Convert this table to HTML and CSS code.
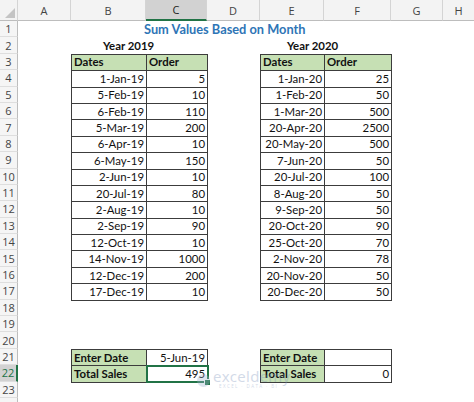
FILE: index.html
```html
<!DOCTYPE html>
<html>
<head>
<meta charset="utf-8">
<link rel="stylesheet" href="styles.css">
</head>
<body>
<div class="sheet">
  <div class="corner"><span class="tri"></span></div>
  <div class="ch">A</div>
  <div class="ch">B</div>
  <div class="ch sel">C</div>
  <div class="ch">D</div>
  <div class="ch">E</div>
  <div class="ch">F</div>
  <div class="ch">G</div>
  <div class="ch last">H</div>

  <div class="rh" style="grid-row:2">1</div>
  <div class="rh" style="grid-row:3">2</div>
  <div class="rh" style="grid-row:4">3</div>
  <div class="rh" style="grid-row:5">4</div>
  <div class="rh" style="grid-row:6">5</div>
  <div class="rh" style="grid-row:7">6</div>
  <div class="rh" style="grid-row:8">7</div>
  <div class="rh" style="grid-row:9">8</div>
  <div class="rh" style="grid-row:10">9</div>
  <div class="rh" style="grid-row:11">10</div>
  <div class="rh" style="grid-row:12">11</div>
  <div class="rh" style="grid-row:13">12</div>
  <div class="rh" style="grid-row:14">13</div>
  <div class="rh" style="grid-row:15">14</div>
  <div class="rh" style="grid-row:16">15</div>
  <div class="rh" style="grid-row:17">16</div>
  <div class="rh" style="grid-row:18">17</div>
  <div class="rh" style="grid-row:19">18</div>
  <div class="rh" style="grid-row:20">19</div>
  <div class="rh" style="grid-row:21">20</div>
  <div class="rh" style="grid-row:22">21</div>
  <div class="rh rsel" style="grid-row:23">22</div>
  <div class="rh" style="grid-row:24">23</div>
  <div class="rh" style="grid-row:25">24</div>

  <div class="title">Sum Values Based on Month</div>
  <div class="year y1">Year 2019</div>
  <div class="year y2">Year 2020</div>

  <table class="tbl t1">
    <colgroup><col class="cb"><col class="cc"></colgroup>
    <tr class="hd"><td>Dates</td><td>Order</td></tr>
    <tr><td>1-Jan-19</td><td>5</td></tr>
    <tr><td>5-Feb-19</td><td>10</td></tr>
    <tr><td>6-Feb-19</td><td>110</td></tr>
    <tr><td>5-Mar-19</td><td>200</td></tr>
    <tr><td>6-Apr-19</td><td>10</td></tr>
    <tr><td>6-May-19</td><td>150</td></tr>
    <tr><td>2-Jun-19</td><td>10</td></tr>
    <tr><td>20-Jul-19</td><td>80</td></tr>
    <tr><td>2-Aug-19</td><td>10</td></tr>
    <tr><td>2-Sep-19</td><td>90</td></tr>
    <tr><td>12-Oct-19</td><td>10</td></tr>
    <tr><td>14-Nov-19</td><td>1000</td></tr>
    <tr><td>12-Dec-19</td><td>200</td></tr>
    <tr><td>17-Dec-19</td><td>10</td></tr>
  </table>

  <table class="tbl t2">
    <colgroup><col class="ce"><col class="cf"></colgroup>
    <tr class="hd"><td>Dates</td><td>Order</td></tr>
    <tr><td>1-Jan-20</td><td>25</td></tr>
    <tr><td>1-Feb-20</td><td>50</td></tr>
    <tr><td>1-Mar-20</td><td>500</td></tr>
    <tr><td>20-Apr-20</td><td>2500</td></tr>
    <tr><td>20-May-20</td><td>500</td></tr>
    <tr><td>7-Jun-20</td><td>50</td></tr>
    <tr><td>20-Jul-20</td><td>100</td></tr>
    <tr><td>8-Aug-20</td><td>50</td></tr>
    <tr><td>9-Sep-20</td><td>50</td></tr>
    <tr><td>20-Oct-20</td><td>90</td></tr>
    <tr><td>25-Oct-20</td><td>70</td></tr>
    <tr><td>2-Nov-20</td><td>78</td></tr>
    <tr><td>20-Nov-20</td><td>50</td></tr>
    <tr><td>20-Dec-20</td><td>50</td></tr>
  </table>

  <table class="tbl t3">
    <colgroup><col class="cb"><col class="cc"></colgroup>
    <tr><td class="lab">Enter Date</td><td>5-Jun-19</td></tr>
    <tr><td class="lab">Total Sales</td><td class="active">495<span class="handle"></span></td></tr>
  </table>

  <table class="tbl t4">
    <colgroup><col class="ce"><col class="cf"></colgroup>
    <tr><td class="lab">Enter Date</td><td></td></tr>
    <tr><td class="lab">Total Sales</td><td>0</td></tr>
  </table>

  <div class="wm">
    <span class="wm-icon"></span>
    <span class="wm-text">exceldemy<span class="wm-sub">EXCEL · DATA · BI</span></span>
  </div>
</div>
</body>
</html>
```

FILE: styles.css
```css
html, body {
  margin: 0;
  padding: 0;
  background: #ffffff;
}
body {
  width: 474px;
  height: 402px;
  overflow: hidden;
  font-family: Lato, "Open Sans", sans-serif;
}
.sheet {
  position: relative;
  display: grid;
  grid-template-columns: 18px 53px 75px 61px 53px 64px 67px 52px 1fr;
  grid-template-rows: 21px repeat(24, 16.4px);
  width: 474px;
  height: 402px;
}
.corner {
  grid-row: 1;
  grid-column: 1;
  background: #f3f3f3;
  border-right: 1px solid #d4d4d4;
  border-bottom: 1px solid #bdbdbd;
  position: relative;
}
.tri {
  position: absolute;
  right: 2px;
  bottom: 2px;
  width: 0;
  height: 0;
  border-left: 10px solid transparent;
  border-bottom: 10px solid #c4c4c4;
}
.ch {
  grid-row: 1;
  background: #f3f3f3;
  border-right: 1px solid #d4d4d4;
  border-bottom: 1px solid #bdbdbd;
  color: #444;
  font-family: "Open Sans", sans-serif;
  font-size: 11px;
  display: flex;
  align-items: center;
  justify-content: center;
}
.ch.last { border-right: none; }
.ch.sel {
  background: #d2d2d2;
  border-bottom: 2px solid #217346;
  color: #222;
}
.rh {
  grid-column: 1;
  background: #f5f5f5;
  border-right: 1px solid #bdbdbd;
  border-bottom: 1px solid #dedede;
  color: #444;
  font-family: "Open Sans", sans-serif;
  font-size: 11px;
  display: flex;
  align-items: center;
  justify-content: center;
}
.rh.rsel {
  background: #d2d2d2;
  border-right: 2px solid #217346;
  color: #217346;
}
.title {
  grid-row: 2;
  grid-column: 2 / 8;
  padding-left: 126px;
  color: #2e75b6;
  font-weight: 700;
  font-size: 12.8px;
  display: flex;
  align-items: center;
  white-space: nowrap;
}
.year {
  grid-row: 3;
  font-weight: 700;
  font-size: 11.4px;
  color: #111;
  display: flex;
  align-items: center;
  white-space: nowrap;
}
.y1 { grid-column: 3 / 5; padding-left: 32px; }
.y2 { grid-column: 6 / 8; padding-left: 27px; }
.tbl {
  border-collapse: collapse;
  table-layout: fixed;
  width: 100%;
  font-size: 11.4px;
  color: #111;
}
.t1 { grid-row: 4 / 19; grid-column: 3 / 5; }
.t2 { grid-row: 4 / 19; grid-column: 6 / 8; }
.t3 { grid-row: 22 / 24; grid-column: 3 / 5; }
.t4 { grid-row: 22 / 24; grid-column: 6 / 8; }
.cb { width: 75px; }
.cc { width: 61px; }
.ce { width: 64px; }
.cf { width: 67px; }
.tbl tr { height: 16.4px; }
.tbl td {
  border: 1px solid #3c3c3c;
  padding: 0 2px;
  text-align: right;
  line-height: 14px;
  white-space: nowrap;
  overflow: visible;
}
.tbl .hd td, .tbl td.lab {
  background: #c6e0b4;
  font-weight: 700;
  text-align: left;
}
td.active {
  position: relative;
  outline: 2px solid #217346;
  outline-offset: -1px;
}
.handle {
  position: absolute;
  right: -4px;
  bottom: -4px;
  width: 5px;
  height: 5px;
  background: #217346;
  border: 1px solid #fff;
}
.wm {
  position: absolute;
  left: 197px;
  top: 370px;
  display: flex;
  align-items: center;
  gap: 3px;
  opacity: 0.35;
  pointer-events: none;
}
.wm-icon {
  width: 13px;
  height: 13px;
  border-radius: 50%;
  background: #9fb3d1;
}
.wm-text {
  display: flex;
  flex-direction: column;
  color: #7f96bd;
  font-family: "Open Sans", sans-serif;
  font-size: 15px;
  line-height: 13px;
  letter-spacing: 0.3px;
}
.wm-sub {
  font-size: 4.5px;
  line-height: 7px;
  letter-spacing: 1.4px;
  padding-left: 6px;
}
```
